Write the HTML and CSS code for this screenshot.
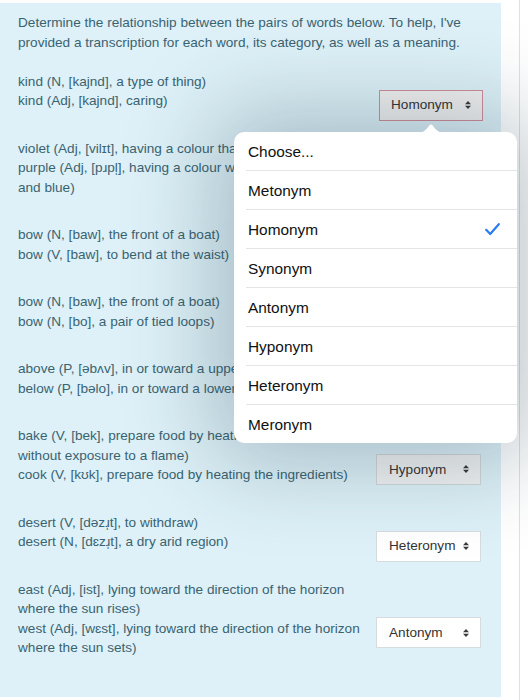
FILE: index.html
```html
<!DOCTYPE html>
<html lang="en">
<head>
<meta charset="utf-8">
<title>Word relationships</title>
<link rel="stylesheet" href="styles.css">
</head>
<body>
<div class="page">
  <div class="panel">
    <p class="intro">Determine the relationship between the pairs of words below. To help, I've provided a transcription for each word, its category, as well as a meaning.</p>

    <div class="item">
      <div class="qtext">kind (N, [kajnd], a type of thing)<br>kind (Adj, [kajnd], caring)</div>
      <div class="select select-focus"><span>Homonym</span><svg class="updown" viewBox="0 0 6 8" width="6" height="8"><path d="M0 3.2 3 0 6 3.2Z M0 4.8 3 8 6 4.8Z"/></svg></div>
    </div>

    <div class="item">
      <div class="qtext">violet (Adj, [vilɪt], having a colour that is bluish-purple)<br>purple (Adj, [pɹpl̩], having a colour which is a mix of red<br>and blue)</div>
      <div class="select"><span>Choose...</span><svg class="updown" viewBox="0 0 6 8" width="6" height="8"><path d="M0 3.2 3 0 6 3.2Z M0 4.8 3 8 6 4.8Z"/></svg></div>
    </div>

    <div class="item">
      <div class="qtext">bow (N, [baw], the front of a boat)<br>bow (V, [baw], to bend at the waist)</div>
      <div class="select"><span>Choose...</span><svg class="updown" viewBox="0 0 6 8" width="6" height="8"><path d="M0 3.2 3 0 6 3.2Z M0 4.8 3 8 6 4.8Z"/></svg></div>
    </div>

    <div class="item">
      <div class="qtext">bow (N, [baw], the front of a boat)<br>bow (N, [bo], a pair of tied loops)</div>
      <div class="select"><span>Choose...</span><svg class="updown" viewBox="0 0 6 8" width="6" height="8"><path d="M0 3.2 3 0 6 3.2Z M0 4.8 3 8 6 4.8Z"/></svg></div>
    </div>

    <div class="item">
      <div class="qtext">above (P, [əbʌv], in or toward a upper place)<br>below (P, [bəlo], in or toward a lower place)</div>
      <div class="select"><span>Choose...</span><svg class="updown" viewBox="0 0 6 8" width="6" height="8"><path d="M0 3.2 3 0 6 3.2Z M0 4.8 3 8 6 4.8Z"/></svg></div>
    </div>

    <div class="item">
      <div class="qtext">bake (V, [bek], prepare food by heating it in an oven<br>without exposure to a flame)<br>cook (V, [kʊk], prepare food by heating the ingredients)</div>
      <div class="select select-grey"><span>Hyponym</span><svg class="updown" viewBox="0 0 6 8" width="6" height="8"><path d="M0 3.2 3 0 6 3.2Z M0 4.8 3 8 6 4.8Z"/></svg></div>
    </div>

    <div class="item">
      <div class="qtext">desert (V, [dəzɹ̩t], to withdraw)<br>desert (N, [dɛzɹ̩t], a dry arid region)</div>
      <div class="select"><span>Heteronym</span><svg class="updown" viewBox="0 0 6 8" width="6" height="8"><path d="M0 3.2 3 0 6 3.2Z M0 4.8 3 8 6 4.8Z"/></svg></div>
    </div>

    <div class="item">
      <div class="qtext">east (Adj, [ist], lying toward the direction of the horizon where the sun rises)<br>west (Adj, [wɛst], lying toward the direction of the horizon where the sun sets)</div>
      <div class="select"><span>Antonym</span><svg class="updown" viewBox="0 0 6 8" width="6" height="8"><path d="M0 3.2 3 0 6 3.2Z M0 4.8 3 8 6 4.8Z"/></svg></div>
    </div>
  </div>
  <div class="gutter"></div>
  <div class="rail"></div>

  <div class="popover">
    <svg class="pointer" viewBox="0 0 26 12" width="26" height="12"><path d="M0 12 C5 12 8 9 10.5 5.5 Q13 1.5 15.5 5.5 C18 9 21 12 26 12Z"/></svg>
    <ul class="options">
      <li class="option">Choose...</li>
      <li class="option">Metonym</li>
      <li class="option selected">Homonym<svg class="check" viewBox="0 0 15 13" width="15" height="13"><path d="M1.2 6.8 5.2 11 13.8 1.2"/></svg></li>
      <li class="option">Synonym</li>
      <li class="option">Antonym</li>
      <li class="option">Hyponym</li>
      <li class="option">Heteronym</li>
      <li class="option">Meronym</li>
    </ul>
  </div>
</div>
</body>
</html>
```

FILE: styles.css
```css
html, body {
  margin: 0;
  padding: 0;
  background: #ffffff;
}

body {
  font-family: "Liberation Sans", Arial, "DejaVu Sans", sans-serif;
  font-size: 13.6px;
  line-height: 19.5px;
  color: #3a6370;
}

.page {
  position: relative;
  display: flex;
  width: 528px;
  height: 700px;
  overflow: hidden;
}

.panel {
  flex: 0 0 501px;
  box-sizing: border-box;
  height: 694px;
  margin-top: 3px;
  padding: 10px 20px 0 18px;
  background: #def1f8;
}

.gutter {
  flex: 0 0 18px;
}

.rail {
  flex: 0 0 1px;
  background: #e0e0e0;
}

.intro {
  margin: 0 0 19.5px;
}

.item {
  display: flex;
  align-items: center;
  justify-content: space-between;
}

.qtext {
  width: 352px;
  padding-bottom: 28px;
}

.select {
  display: flex;
  align-items: center;
  justify-content: space-between;
  box-sizing: border-box;
  width: 105px;
  height: 31px;
  padding: 0 11px 0 12px;
  background: #ffffff;
  border: 1px solid #d6dcde;
  color: #333333;
  font-size: 13.6px;
}

.select-grey {
  background: #f1f2f2;
  border-color: #d3d7d8;
}

.select-focus {
  width: 104px;
  margin-right: -2px;
  padding-left: 11px;
  background: #f1f0f0;
  border-color: #cf8e97;
}

.updown {
  fill: #3a3a3a;
}

.popover {
  position: absolute;
  left: 234px;
  top: 132px;
  width: 283px;
  height: 311px;
  background: #ffffff;
  border-radius: 10px;
  box-shadow: 0 0 90px 20px rgba(20, 50, 70, 0.28);
}

.pointer {
  position: absolute;
  left: 184px;
  top: -11px;
  fill: #ffffff;
  display: block;
}

.options {
  list-style: none;
  margin: 0;
  padding: 0;
}

.option {
  display: flex;
  align-items: center;
  justify-content: space-between;
  box-sizing: border-box;
  height: 39px;
  margin-left: 12px;
  padding: 1px 17px 0 2px;
  border-bottom: 1px solid #e4e4e4;
  font-size: 15.4px;
  color: #111111;
}

.option:last-child {
  border-bottom: none;
}

.check {
  fill: none;
  stroke: #2a7cf0;
  stroke-width: 2.2;
  stroke-linecap: round;
  stroke-linejoin: round;
}
```
